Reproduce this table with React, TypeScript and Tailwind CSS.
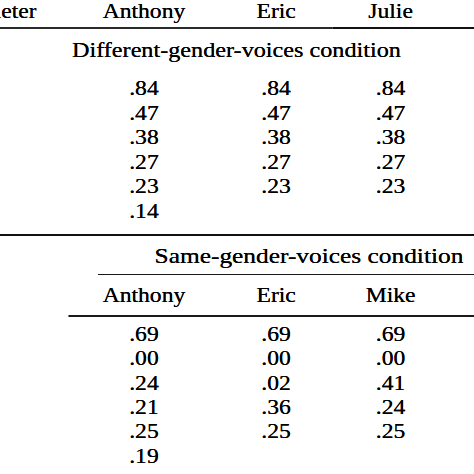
const serif = { fontFamily: '"Liberation Serif", "Times New Roman", serif' };

const different = [
  ['.84', '.84', '.84'],
  ['.47', '.47', '.47'],
  ['.38', '.38', '.38'],
  ['.27', '.27', '.27'],
  ['.23', '.23', '.23'],
  ['.14', '', ''],
];

const same = [
  ['.69', '.69', '.69'],
  ['.00', '.00', '.00'],
  ['.24', '.02', '.41'],
  ['.21', '.36', '.24'],
  ['.25', '.25', '.25'],
  ['.19', '', ''],
];

const ValueRow = ({ values, height }: { values: string[]; height: string }) => (
  <div className={`flex pl-[82px] ${height}`}>
    <div className="w-[80px] text-center">{values[0]}</div>
    <div className="ml-[32px] w-[80px] text-center">{values[1]}</div>
    <div className="ml-[17px] w-[80px] text-center">{values[2]}</div>
  </div>
);

const HeaderRow = ({ names, lead }: { names: string[]; lead?: string }) => (
  <div className="flex h-[24px]">
    <div className="w-[31px] flex justify-end overflow-hidden whitespace-nowrap">{lead}</div>
    <div className="ml-[51px] w-[80px] text-center">{names[0]}</div>
    <div className="ml-[32px] w-[80px] text-center">{names[1]}</div>
    <div className="ml-[17px] w-[80px] text-center">{names[2]}</div>
  </div>
);

export default function App() {
  return (
    <div className="w-[474px] h-[474px] overflow-hidden bg-white">
      <div
        className="w-[402px] origin-top-left scale-x-[1.18] text-[20px] leading-[24px] text-black [text-shadow:0_0_0.6px_#000]"
        style={serif}
      >
        {/* header, first table */}
        <div className="mt-[-1px]">
          <HeaderRow lead="Parameter" names={['Anthony', 'Eric', 'Julie']} />
        </div>
        <div className="mt-[4px] flex">
          <div className="h-[1.5px] flex-1 bg-[#2a2a2a]" />
          <div className="h-[2px] w-[120px] bg-[#111]" />
        </div>

        <div className="mt-[9px] pl-[61px] text-[20.5px] whitespace-nowrap">Different-gender-voices condition</div>

        <div className="mt-[14.4px]">
          {different.map((r, i) => (
            <ValueRow key={i} values={r} height="h-[24.5px]" />
          ))}
        </div>

        <div className="mt-[10.5px] h-[2px] bg-[#111]" />

        {/* second table */}
        <div className="mt-[7.7px] pl-[131px] text-[21.5px] whitespace-nowrap">Same-gender-voices condition</div>
        <div className="mt-[6.3px] ml-[83px] h-[1.5px] bg-[#1a1a1a]" />

        <div className="mt-[7.7px]">
          <HeaderRow names={['Anthony', 'Eric', 'Mike']} />
        </div>
        <div className="mt-[8px] ml-[58px] h-[1.5px] bg-[#1a1a1a]" />

        <div className="mt-[5.5px]">
          {same.map((r, i) => (
            <ValueRow key={i} values={r} height="h-[24.3px]" />
          ))}
        </div>
      </div>
    </div>
  );
}
